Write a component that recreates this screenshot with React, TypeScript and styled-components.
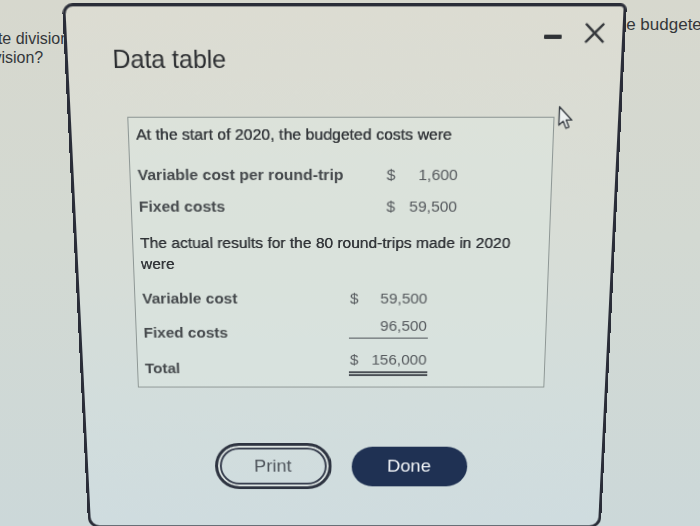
import React from "react";
import styled, { createGlobalStyle } from "styled-components";

const GlobalStyle = createGlobalStyle`
  html, body {
    margin: 0;
    height: 526px;
    overflow: hidden;
  }
  body {
    font-family: "Liberation Sans", Arial, sans-serif;
    background: linear-gradient(180deg, #d7d8ce 0%, #d3d9d2 45%, #ccd8d9 100%);
    color: #333;
  }
`;

const Page = styled.div`
  position: relative;
  height: 526px;
  display: flex;
  justify-content: space-between;
  overflow: hidden;
`;

const SideText = styled.div<{ $top: number; $size: number }>`
  padding-top: ${p => p.$top}px;
  font-size: ${p => p.$size}px;
  line-height: 19px;
  color: #34373a;
  white-space: nowrap;
`;

const RightSide = styled(SideText)`
  width: 88px;
  overflow: hidden;
  line-height: 20px;
`;

const CutLine = styled.div<{ $shift: number }>`
  margin-left: ${p => p.$shift}px;
`;

const Modal = styled.div`
  position: absolute;
  left: 75px;
  top: 14px;
  width: 539px;
  height: 529px;
  box-sizing: border-box;
  border: 3px solid #2a2d38;
  border-radius: 10px 6px 12px 12px;
  background: linear-gradient(180deg, #dcdcd2 0%, #d8ddd6 40%, #d2dddc 75%, #cfdcdf 100%);
  transform-origin: 270px 249px;
  transform: perspective(500px) rotateX(-5.3deg);
  display: flex;
  flex-direction: column;
`;

const Header = styled.div`
  display: flex;
  align-items: flex-start;
  padding: 15px 17px 0 43px;
`;

const Title = styled.h1`
  margin: 20px 0 0;
  font-size: 24px;
  line-height: 28px;
  font-weight: 400;
  color: #2b2d30;
`;

const Controls = styled.div`
  margin-left: auto;
  display: flex;
  align-items: flex-start;
  gap: 22px;
`;

const MinimizeBar = styled.div`
  margin-top: 11px;
  width: 17px;
  height: 4px;
  border-radius: 1px;
  background: #2f3236;
`;

const Panel = styled.div`
  margin: 40px 0 0 55px;
  width: 416px;
  height: 271px;
  box-sizing: border-box;
  border: 1px solid #8e9795;
  background: rgba(222, 232, 226, 0.45);
  padding: 5px 8px 0 7px;
`;

const Intro = styled.p`
  margin: 0;
  font-size: 15.5px;
  line-height: 21px;
  color: #2f3236;
  text-shadow: 0 0 0.4px #2f3236;
`;

const Para = styled(Intro)<{ $top: number }>`
  margin-top: ${p => p.$top}px;
  width: 382px;
`;

const CostGrid = styled.div<{ $cols: string; $top: number }>`
  display: grid;
  grid-template-columns: ${p => p.$cols};
  margin-top: ${p => p.$top}px;
`;

const Label = styled.div<{ $h: number }>`
  height: ${p => p.$h}px;
  display: flex;
  align-items: center;
  font-size: 15.5px;
  font-weight: 700;
  color: #464a4d;
`;

const Value = styled.div<{ $h: number; $pad?: number }>`
  height: ${p => p.$h}px;
  box-sizing: border-box;
  display: flex;
  align-items: ${p => (p.$pad === undefined ? "center" : "flex-start")};
  padding-top: ${p => p.$pad ?? 0}px;
  font-size: 15.5px;
  line-height: 21px;
  color: #55595d;
`;

const Amount = styled.div<{ $rule?: "single" | "double" }>`
  flex: 1;
  display: flex;
  justify-content: space-between;
  padding: 0 1px ${p => (p.$rule ? 2 : 0)}px;
  border-bottom: ${p =>
    p.$rule === "double" ? "5px double #4a4f55" : p.$rule === "single" ? "1.5px solid #4a4f55" : "none"};
`;

const Footer = styled.div`
  margin-top: 59px;
  display: flex;
  align-items: center;
  justify-content: center;
  gap: 21px;
  padding-right: 8px;
`;

const PrintButton = styled.button`
  width: 121px;
  height: 50px;
  box-sizing: border-box;
  border: 3px solid #2e3441;
  border-radius: 25px;
  box-shadow: inset 0 0 0 2px #dde4e2, inset 0 0 0 4px #394050;
  background: transparent;
  font-family: inherit;
  font-size: 19px;
  color: #4f555c;
`;

const DoneButton = styled.button`
  width: 120px;
  height: 43px;
  border: none;
  border-radius: 22px;
  background: #1f3153;
  font-family: inherit;
  font-size: 19px;
  color: #f2f5f8;
`;

const Cursor = styled.svg`
  position: absolute;
  left: 474px;
  top: 92px;
`;

export default function App() {
  return (
    <>
      <GlobalStyle />
      <Page>
        <SideText $top={29} $size={16}>
          <CutLine $shift={-11}>ate division of the</CutLine>
          <CutLine $shift={-19}>division?</CutLine>
        </SideText>
        <RightSide $top={15} $size={17}>
          the budgeted
        </RightSide>

        <Modal>
          <Header>
            <Title>Data table</Title>
            <Controls>
              <MinimizeBar />
              <svg width="19" height="19" viewBox="0 0 19 19">
                <path d="M1.5 1.5 L17.5 17.5 M17.5 1.5 L1.5 17.5" stroke="#35383c" strokeWidth="2.4" strokeLinecap="round" />
              </svg>
            </Controls>
          </Header>

          <Panel>
            <Intro>At the start of 2020, the budgeted costs were</Intro>
            <CostGrid $cols="244px 72px" $top={13}>
              <Label $h={31}>Variable cost per round-trip</Label>
              <Value $h={31}>
                <Amount>
                  <span>$</span>
                  <span>1,600</span>
                </Amount>
              </Value>
              <Label $h={31}>Fixed costs</Label>
              <Value $h={31}>
                <Amount>
                  <span>$</span>
                  <span>59,500</span>
                </Amount>
              </Value>
            </CostGrid>

            <Para $top={10}>The actual results for the 80 round-trips made in 2020 were</Para>

            <CostGrid $cols="208px 80px" $top={7}>
              <Label $h={35}>Variable cost</Label>
              <Value $h={35}>
                <Amount>
                  <span>$</span>
                  <span>59,500</span>
                </Amount>
              </Value>
              <Label $h={35}>Fixed costs</Label>
              <Value $h={35} $pad={0}>
                <Amount $rule="single">
                  <span />
                  <span>96,500</span>
                </Amount>
              </Value>
              <Label $h={39}>Total</Label>
              <Value $h={39} $pad={0}>
                <Amount $rule="double">
                  <span>$</span>
                  <span>156,000</span>
                </Amount>
              </Value>
            </CostGrid>
          </Panel>

          <Footer>
            <PrintButton>Print</PrintButton>
            <DoneButton>Done</DoneButton>
          </Footer>

          <Cursor width="16" height="24" viewBox="0 0 16 24">
            <path d="M1.5 1.5 L1.5 19 L5.6 15.2 L8.6 22 L11.4 20.8 L8.5 14.2 L14 14.2 Z" fill="#eef2f2" stroke="#3b4046" strokeWidth="1.3" strokeLinejoin="round" />
          </Cursor>
        </Modal>
      </Page>
    </>
  );
}
